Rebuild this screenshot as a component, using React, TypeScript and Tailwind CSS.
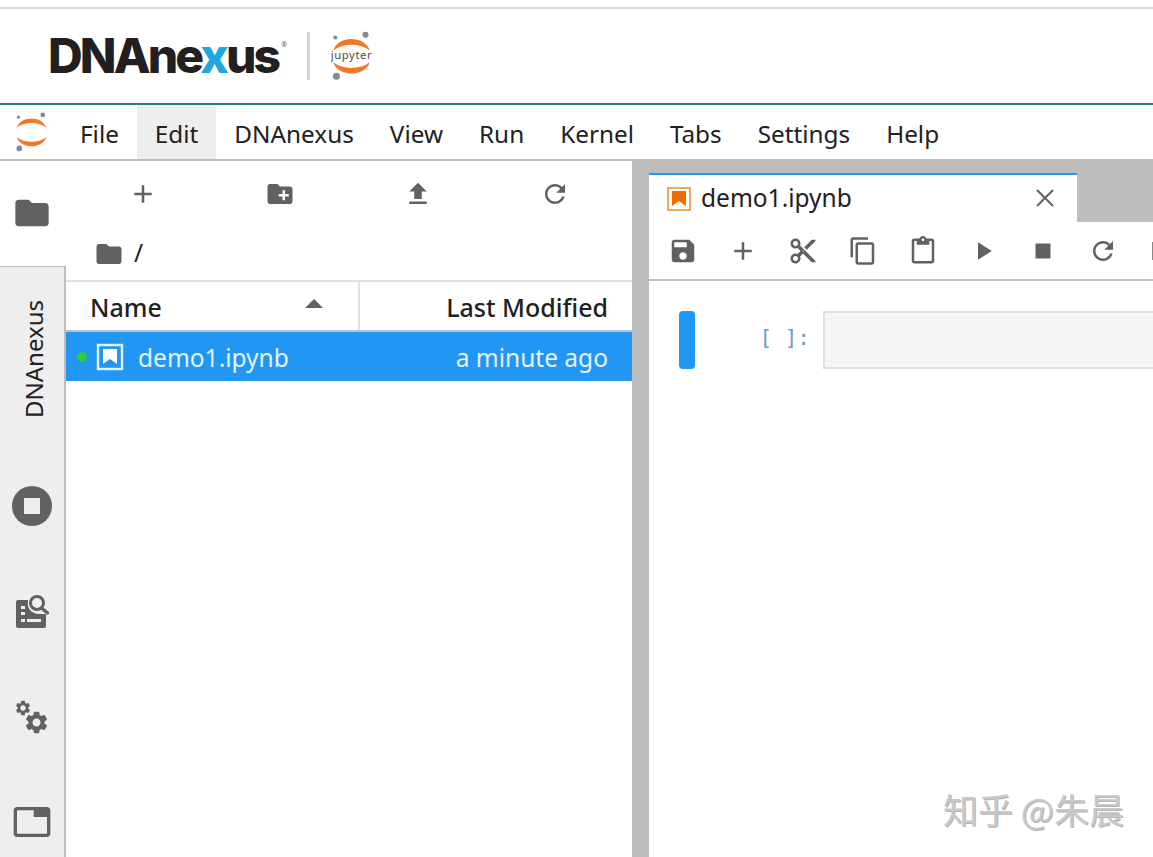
const GRAY = "#616161";

// Material-style icon paths used across the toolbars
const paths = {
  folder: "M10 4H4c-1.1 0-1.99.9-1.99 2L2 18c0 1.1.9 2 2 2h16c1.1 0 2-.9 2-2V8c0-1.1-.9-2-2-2h-8l-2-2z",
  newFolder:
    "M20 6h-8l-2-2H4c-1.11 0-1.99.89-1.99 2L2 18c0 1.11.89 2 2 2h16c1.11 0 2-.89 2-2V8c0-1.11-.89-2-2-2zm-1 8h-3v3h-2v-3h-3v-2h3V9h2v3h3v2z",
  upload: "M9 16h6v-6h4l-7-7-7 7h4zm-4 2h14v2H5z",
  refresh:
    "M17.65 6.35C16.2 4.9 14.21 4 12 4c-4.42 0-7.99 3.58-7.99 8s3.57 8 7.99 8c3.73 0 6.84-2.55 7.73-6h-2.08c-.82 2.33-3.04 4-5.65 4-3.31 0-6-2.69-6-6s2.69-6 6-6c1.66 0 3.14.69 4.22 1.78L13 11h7V4l-2.35 2.35z",
  plus: "M19 13h-6v6h-2v-6H5v-2h6V5h2v6h6v2z",
  save: "M17 3H5c-1.11 0-2 .9-2 2v14c0 1.1.89 2 2 2h14c1.1 0 2-.9 2-2V7l-4-4zm-5 16c-1.66 0-3-1.34-3-3s1.34-3 3-3 3 1.34 3 3-1.34 3-3 3zm3-10H5V5h10v4z",
  cut: "M9.64 7.64c.23-.5.36-1.05.36-1.64 0-2.21-1.79-4-4-4S2 3.79 2 6s1.79 4 4 4c.59 0 1.14-.13 1.64-.36L10 12l-2.36 2.36C7.14 14.13 6.59 14 6 14c-2.21 0-4 1.79-4 4s1.79 4 4 4 4-1.79 4-4c0-.59-.13-1.14-.36-1.64L12 14l7 7h3v-1L9.64 7.64zM6 8c-1.1 0-2-.89-2-2s.9-2 2-2 2 .89 2 2-.9 2-2 2zm0 12c-1.1 0-2-.89-2-2s.9-2 2-2 2 .89 2 2-.9 2-2 2zm6-7.5c-.28 0-.5-.22-.5-.5s.22-.5.5-.5.5.22.5.5-.22.5-.5.5zM19 3l-6 6 2 2 7-7V3z",
  copy: "M16 1H4c-1.1 0-2 .9-2 2v14h2V3h12V1zm3 4H8c-1.1 0-2 .9-2 2v14c0 1.1.9 2 2 2h11c1.1 0 2-.9 2-2V7c0-1.1-.9-2-2-2zm0 16H8V7h11v14z",
  paste:
    "M19 2h-4.18C14.4.84 13.3 0 12 0c-1.3 0-2.4.84-2.82 2H5c-1.1 0-2 .9-2 2v16c0 1.1.9 2 2 2h14c1.1 0 2-.9 2-2V4c0-1.1-.9-2-2-2zm-7 0c.55 0 1 .45 1 1s-.45 1-1 1-1-.45-1-1 .45-1 1-1zm7 18H5V4h2v3h10V4h2v16z",
  run: "M8 5v14l11-7z",
  stop: "M6 6h12v12H6z",
  tab: "M21 3H3c-1.1 0-2 .9-2 2v14c0 1.1.9 2 2 2h18c1.1 0 2-.9 2-2V5c0-1.1-.9-2-2-2zm0 16H3V5h10v4h8v10z",
  gear: "M19.14 12.94c.04-.3.06-.61.06-.94 0-.32-.02-.64-.07-.94l2.03-1.58c.18-.14.23-.41.12-.61l-1.92-3.32c-.12-.22-.37-.29-.59-.22l-2.39.96c-.5-.38-1.03-.7-1.62-.94l-.36-2.54c-.04-.24-.24-.41-.48-.41h-3.84c-.24 0-.43.17-.47.41l-.36 2.54c-.59.24-1.13.57-1.62.94l-2.39-.96c-.22-.08-.47 0-.59.22L2.74 8.87c-.12.21-.08.47.12.61l2.03 1.58c-.05.3-.09.63-.09.94s.02.64.07.94l-2.03 1.58c-.18.14-.23.41-.12.61l1.92 3.32c.12.22.37.29.59.22l2.39-.96c.5.38 1.03.7 1.62.94l.36 2.54c.05.24.24.41.48.41h3.84c.24 0 .44-.17.47-.41l.36-2.54c.59-.24 1.13-.56 1.62-.94l2.39.96c.22.08.47 0 .59-.22l1.92-3.32c.12-.22.07-.47-.12-.61l-2.01-1.58zM12 15.6c-1.98 0-3.6-1.62-3.6-3.6s1.62-3.6 3.6-3.6 3.6 1.62 3.6 3.6-1.62 3.6-3.6 3.6z",
};

const Icon = ({ d, size = 30 }: { d: string; size?: number }) => (
  <svg width={size} height={size} viewBox="0 0 24 24" fill={GRAY} className="block shrink-0">
    <path d={d} />
  </svg>
);

const JupyterMark = ({ size, label }: { size: number; label?: boolean }) => (
  <svg width={size} height={size * 1.2} viewBox="1 0 38 45.6" className="block shrink-0">
    <path d="M3 18C8 4 32 4 37 18C28 11 12 11 3 18Z" fill="#f37726" />
    <path d="M3 29C8 43 32 43 37 29C28 36 12 36 3 29Z" fill="#f37726" />
    <circle cx="33" cy="3.4" r="2.8" fill="#8a8a8a" />
    <circle cx="5" cy="6" r="1.9" fill="#8a8a8a" />
    <circle cx="6" cy="42" r="3.3" fill="#8a8a8a" />
    {label && (
      <text x="20" y="26" fontSize="10.5" letterSpacing="0.5" textAnchor="middle" fill="#4e4e4e" fontFamily="'Noto Sans', sans-serif">
        jupyter
      </text>
    )}
  </svg>
);

const NotebookIcon = ({ light }: { light?: boolean }) =>
  light ? (
    <svg width="28" height="28" viewBox="0 0 28 28" className="block shrink-0">
      <rect x="2" y="2" width="24" height="24" fill="none" stroke="#e3f2fd" strokeWidth="2.4" />
      <path d="M7 6h14v15l-7-5-7 5z" fill="#fff" />
    </svg>
  ) : (
    <svg width="24" height="24" viewBox="0 0 24 24" className="block shrink-0">
      <rect x="1" y="1" width="22" height="22" fill="#fff" stroke="#f0a860" strokeWidth="2" />
      <path d="M5 4h14v15l-7-5-7 5z" fill="#ef6c00" />
    </svg>
  );

const TableSearchIcon = () => (
  <svg width="34" height="36" viewBox="0 0 34 36" className="block shrink-0">
    <path d="M3 6h10v2c-1 6 3 12 12 12h6v12a2 2 0 0 1-2 2H3a2 2 0 0 1-2-2V8a2 2 0 0 1 2-2z" fill={GRAY} />
    <path d="M6 12h4v3H6zM6 18h4v3H6zM6 25h4v3H6zM12 25h14v3H12z" fill="#eee" />
    <circle cx="22" cy="9" r="6.5" fill="none" stroke={GRAY} strokeWidth="3" />
    <path d="M26.5 14l6 5" stroke={GRAY} strokeWidth="3.4" strokeLinecap="round" />
  </svg>
);

const GearsIcon = () => (
  <svg width="36" height="38" viewBox="0 0 36 38" fill={GRAY} className="block shrink-0">
    <svg x="0" y="0" width="18" height="18" viewBox="0 0 24 24">
      <path d={paths.gear} />
    </svg>
    <svg x="9" y="10" width="27" height="27" viewBox="0 0 24 24">
      <path d={paths.gear} />
    </svg>
  </svg>
);

const menuItems = ["File", "Edit", "DNAnexus", "View", "Run", "Kernel", "Tabs", "Settings", "Help"];
const fileActions = [paths.plus, paths.newFolder, paths.upload, paths.refresh];
const notebookActions = [paths.save, paths.plus, paths.cut, paths.copy, paths.paste, paths.run, paths.stop, paths.refresh];

export default function App() {
  return (
    <div
      className="relative flex h-[857px] w-[1153px] flex-col overflow-hidden bg-white text-[#212121]"
      style={{ fontFamily: "'Noto Sans', 'Open Sans', sans-serif" }}
    >
      {/* DNAnexus brand header */}
      <header className="mt-[7px] flex h-[98px] shrink-0 items-center border-t-2 border-b-2 border-t-[#dcdcdc] border-b-[#2a7a94] pl-[48px]">
        <div className="flex items-start">
          <span
            className="text-[48px] leading-none font-extrabold tracking-[-2.9px] text-[#231f20]"
            style={{ fontFamily: "Inter, sans-serif" }}
          >
            DNAne<span className="text-[#1ea7e1]">x</span>us
          </span>
          <span className="mt-[9px] ml-[3px] text-[7px] leading-none text-[#555]">®</span>
        </div>
        <div className="mr-[21px] ml-[20px] h-[48px] w-[3px] bg-[#d4d4d4]" />
        <JupyterMark size={41} label />
      </header>

      {/* Menu bar */}
      <nav className="flex h-[56px] shrink-0 items-stretch border-b-2 border-[#bdbdbd]">
        <div className="flex w-[62px] shrink-0 items-center pl-[15px]">
          <JupyterMark size={33} />
        </div>
        {menuItems.map((item) => (
          <div
            key={item}
            className={`flex items-center px-[18px] pt-[4px] text-[24.3px] ${item === "Edit" ? "bg-[#eeeeee]" : ""}`}
          >
            {item}
          </div>
        ))}
      </nav>

      <div className="flex min-h-0 flex-1">
        {/* Left activity bar */}
        <aside className="flex w-[66px] shrink-0 flex-col">
          <div className="flex h-[105px] shrink-0 items-center justify-center pr-[2px] pb-[2px]">
            <Icon d={paths.folder} size={40} />
          </div>
          <div className="flex flex-1 flex-col items-center border-t border-r-2 border-[#bdbdbd] bg-[#eeeeee]">
            <div className="mt-[30px] ml-[3px] flex h-[124px] items-center justify-center text-[24px] [writing-mode:vertical-rl] rotate-180">
              DNAnexus
            </div>
            <div className="mt-[65px] flex h-[40px] w-[40px] items-center justify-center rounded-full bg-[#616161]">
              <div className="h-[16px] w-[16px] bg-[#eeeeee]" />
            </div>
            <div className="mt-[68px]">
              <TableSearchIcon />
            </div>
            <div className="mt-[69px]">
              <GearsIcon />
            </div>
            <div className="mt-[65px]">
              <Icon d={paths.tab} size={40} />
            </div>
          </div>
        </aside>

        {/* File browser */}
        <section className="flex w-[566px] shrink-0 flex-col">
          <div className="grid h-[64px] shrink-0 grid-cols-4 px-2">
            {fileActions.map((d) => (
              <div key={d} className="flex items-center justify-center pt-[2px]">
                <Icon d={d} />
              </div>
            ))}
          </div>
          <div className="flex h-[55px] shrink-0 items-center gap-[10px] pt-[2px] pl-[28px] text-[24.5px]">
            <Icon d={paths.folder} />
            <span>/</span>
          </div>
          <div className="flex h-[52px] shrink-0 border-y-2 border-t-[#e0e0e0] border-b-[#b7c4cf] text-[25px] font-medium">
            <div className="flex w-[294px] shrink-0 items-center justify-between border-r-2 border-[#e0e0e0] pt-[4px] pr-[35px] pl-[24px]">
              <span>Name</span>
              <span className="mb-[10px] h-0 w-0 border-x-[9px] border-b-[9px] border-x-transparent border-b-[#616161]" />
            </div>
            <div className="flex flex-1 items-center justify-end pt-[4px] pr-[24px]">Last Modified</div>
          </div>
          <div className="flex h-[49px] shrink-0 items-center bg-[#2196f3] pr-[24px] pl-[11px] text-[24.5px] text-[#e3f2fd]">
            <span className="mr-[9px] h-[10px] w-[10px] rounded-full bg-[#2ecc40]" />
            <NotebookIcon light />
            <span className="ml-[14px] pt-[4px]">demo1.ipynb</span>
            <span className="ml-auto pt-[4px]">a minute ago</span>
          </div>
        </section>

        {/* Splitter */}
        <div className="w-[17px] shrink-0 bg-[#bdbdbd]" />

        {/* Notebook area */}
        <section className="flex min-w-0 flex-1 flex-col">
          <div className="flex h-[61px] shrink-0 items-end bg-[#bdbdbd]">
            <div className="flex h-[49px] w-[428px] items-center border-t-2 border-[#2196f3] bg-white pr-[22px] pl-[18px] text-[24.5px]">
              <NotebookIcon />
              <span className="mb-[1px] ml-[10px]">demo1.ipynb</span>
              <svg width="20" height="20" viewBox="0 0 20 20" className="mb-[2px] ml-auto" stroke={GRAY} strokeWidth="2">
                <path d="M2 2l16 16M18 2L2 18" />
              </svg>
            </div>
          </div>
          <div className="flex h-[59px] shrink-0 items-center overflow-hidden border-b-2 border-[#c4c4c4] pt-[1px] pl-[19px]">
            {notebookActions.map((d, i) => (
              <div key={i} className="flex w-[60px] shrink-0 justify-start">
                <Icon d={d} />
              </div>
            ))}
            <div className="ml-[4px] h-[18px] w-[4px] shrink-0 bg-[#8a8a8a]" />
          </div>
          <div className="mt-[30px] flex h-[58px] shrink-0 items-center pl-[30px]">
            <div className="h-[58px] w-[16px] shrink-0 rounded-[4px] bg-[#2196f3]" />
            <div
              className="mb-[2px] w-[128px] shrink-0 pr-[13px] text-right text-[21px] font-light text-[#6b9cc4]"
              style={{ fontFamily: "'DejaVu Sans Mono', 'Liberation Mono', monospace" }}
            >
              [ ]:
            </div>
            <div className="h-[58px] flex-1 border-2 border-r-0 border-[#e0e0e0] bg-[#f5f5f5]" />
          </div>
        </section>
      </div>

      {/* Watermark sits over the page */}
      <div
        className="absolute top-[786px] left-[943px] text-[35px] leading-[46px] whitespace-nowrap text-[#c8c8c8] [text-shadow:1px_1px_0_#b4b4b4]"
        style={{ fontFamily: "'Noto Sans CJK SC', sans-serif" }}
      >
        知乎 @朱晨
      </div>
    </div>
  );
}
